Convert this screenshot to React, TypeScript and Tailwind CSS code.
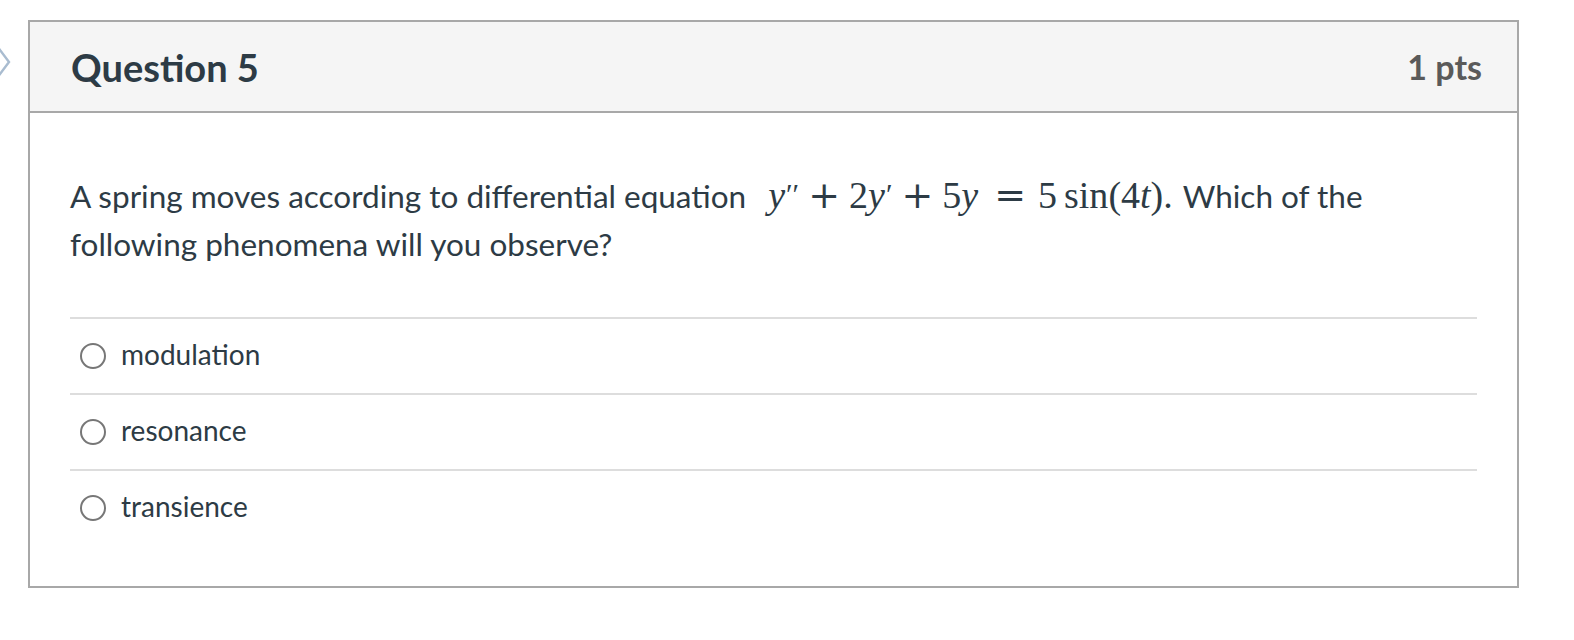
import React from 'react'

const options = ['modulation', 'resonance', 'transience']

function Radio() {
  return <span className="h-[26px] w-[26px] shrink-0 rounded-full border-2 border-[#777777] bg-white" />
}

// KaTeX-like rendering of y'' + 2y' + 5y = 5 sin(4t)
function Equation() {
  const op = "font-['DejaVu_Serif',serif] text-[38px] font-light not-italic"
  const prime = "relative top-[-0.12em] ml-[1px] text-[30px] not-italic"
  return (
    <span className="ml-[22px] mr-[10px] whitespace-nowrap font-['Liberation_Serif',serif] text-[38px] leading-none">
      <i>y</i>
      <span className={prime}>′′</span>
      <span className={`${op} mx-[9px]`}>+</span>
      2<i>y</i>
      <span className={prime}>′</span>
      <span className={`${op} mx-[9px]`}>+</span>
      5<i>y</i>
      <span className={`${op} ml-[16px] mr-[12px]`}>=</span>
      5<span className="ml-[7px]">sin</span>(4<i>t</i>).
    </span>
  )
}

export default function App() {
  return (
    <div className="relative min-h-screen bg-white pl-[28px] pt-[20px] font-['Lato','Liberation_Sans',sans-serif] text-[#2d3b45]">
      {/* collapse chevron, cut off at the page edge */}
      <svg className="absolute left-0 top-[40px]" width="12" height="44" viewBox="0 0 12 44" fill="none">
        <polyline points="-9,-2 9,22 -9,46" stroke="#a9bcd0" strokeWidth="2.4" />
      </svg>

      <div className="w-[1491px] border-2 border-[#a8a8a8] bg-white">
        <div className="flex h-[91px] items-center justify-between border-b-2 border-[#a8a8a8] bg-[#f5f5f5] pl-[41px] pr-[35px]">
          <h2 className="text-[38px] font-bold leading-none">Question 5</h2>
          <span className="text-[34px] font-bold leading-none text-[#5a5a5a]">1 pts</span>
        </div>

        <div className="px-[40px] pb-[41px] pt-[59px]">
          <p className="pr-[40px] text-[31.5px] leading-[48px]">
            A spring moves according to differential equation
            <Equation />
            Which of the following phenomena will you observe?
          </p>

          <div className="mt-[49px]">
            {options.map((o) => (
              <label
                key={o}
                className="flex h-[76px] items-center gap-[15px] border-t-2 border-[#dddddd] pl-[10px]"
              >
                <Radio />
                <span className="pb-[4px] text-[28px] leading-none">{o}</span>
              </label>
            ))}
          </div>
        </div>
      </div>
    </div>
  )
}
